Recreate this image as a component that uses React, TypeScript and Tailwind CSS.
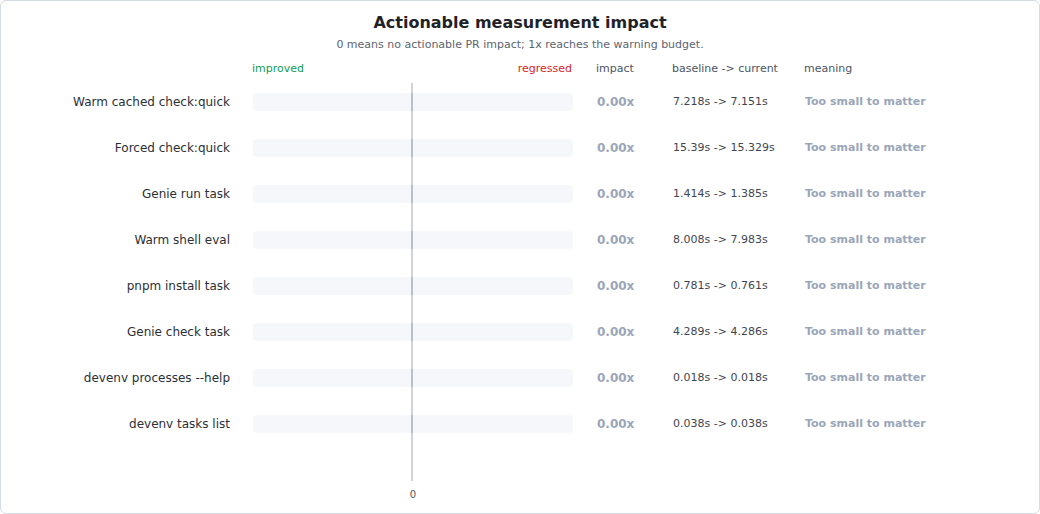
const rows = [
  ["Warm cached check:quick", "7.218s -> 7.151s"],
  ["Forced check:quick", "15.39s -> 15.329s"],
  ["Genie run task", "1.414s -> 1.385s"],
  ["Warm shell eval", "8.008s -> 7.983s"],
  ["pnpm install task", "0.781s -> 0.761s"],
  ["Genie check task", "4.289s -> 4.286s"],
  ["devenv processes --help", "0.018s -> 0.018s"],
  ["devenv tasks list", "0.038s -> 0.038s"],
];

export default function App() {
  return (
    <div className="w-[1040px] h-[514px] bg-white" style={{ fontFamily: '"DejaVu Sans", sans-serif' }}>
      <div className="h-full border border-[#d5dbe3] rounded-[6px] flex flex-col">
        <div className="text-center text-[16px] leading-[20px] font-bold text-[#1f2328] mt-[12px]">Actionable measurement impact</div>
        <div className="text-center text-[11px] leading-[14px] text-[#5c6470] mt-[5px]">0 means no actionable PR impact; 1x reaches the warning budget.</div>
        <div className="relative mt-[7px]">
          <div className="absolute left-[410px] top-[24px] w-[2px] h-[398px] bg-[#d0d4da]" />
          <div className="flex items-center h-[20px] text-[11px]">
            <div className="w-[251px]" />
            <div className="w-[320px] flex justify-between">
              <span style={{ color: "#0f9d58" }}>improved</span>
              <span className="text-[#dc2626]">regressed</span>
            </div>
            <div className="w-[24px]" />
            <div className="w-[76px] text-[#4b5563]">impact</div>
            <div className="w-[132px] text-[#4b5563]">baseline -&gt; current</div>
            <div className="text-[#4b5563]">meaning</div>
          </div>
          {rows.map(([name, base]) => (
            <div key={name} className="flex items-center h-[46px]">
              <div className="w-[229px] text-right text-[12px] text-[#2b2f36]">{name}</div>
              <div className="w-[23px]" />
              <div className="relative w-[320px] h-[18px] bg-[#f5f7fa] rounded-[4px]">
                <div className="absolute left-[158px] top-0 w-[2px] h-[18px] bg-[#b7c0cc]" />
              </div>
              <div className="w-[24px]" />
              <div className="w-[76px] text-[12px] font-bold text-[#9aa6b8]">0.00x</div>
              <div className="w-[132px] text-[11px] text-[#3f4650]">{base}</div>
              <div className="text-[11px] font-bold text-[#9aa6b8]">Too small to matter</div>
            </div>
          ))}
          <div className="h-[42px]" />
          <div className="w-[320px] ml-[252px] text-center text-[10px] text-[#555] leading-[12px]">0</div>
        </div>
      </div>
    </div>
  );
}
